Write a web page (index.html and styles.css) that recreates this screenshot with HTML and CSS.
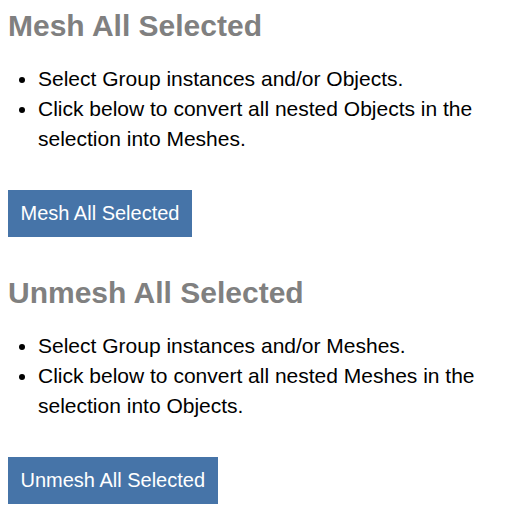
FILE: index.html
```html
<html>

    <head>
        <title>
            Mesh tools
        </title>

        <link rel="stylesheet" href="styles.css">
    </head>

    <body>
        <div class="section">
            <h2 class="title">Mesh All Selected</h2>
            <ul class="steps">
                <li>Select Group instances and/or Objects.</li>
                <li>Click below to convert all nested Objects in the selection into Meshes.</li>
            </ul>
            <button class="action">Mesh All Selected</button>
        </div>

        <div class="section">
            <h2 class="title">Unmesh All Selected</h2>
            <ul class="steps">
                <li>Select Group instances and/or Meshes.</li>
                <li>Click below to convert all nested Meshes in the selection into Objects.</li>
            </ul>
            <button class="action">Unmesh All Selected</button>
        </div>
    </body>
</html>
```

FILE: styles.css
```css
body {
    margin: 8px;
    font-family: "Liberation Sans", Arial, sans-serif;
    color: #000;
    background: #fff;
}

.section {
    display: flex;
    flex-direction: column;
    align-items: flex-start;
    margin-bottom: 38px;
}

.title {
    margin: 0;
    font-size: 30px;
    line-height: 36px;
    font-weight: bold;
    color: #808080;
}

.steps {
    margin: 20px 0 36px 0;
    padding-left: 30px;
    font-size: 21px;
    line-height: 30px;
}

.action {
    border: none;
    margin: 0;
    padding: 12px 12.5px;
    background: #4674a8;
    color: #fff;
    font-family: "Liberation Sans", Arial, sans-serif;
    font-size: 20px;
    line-height: 23px;
}
```
